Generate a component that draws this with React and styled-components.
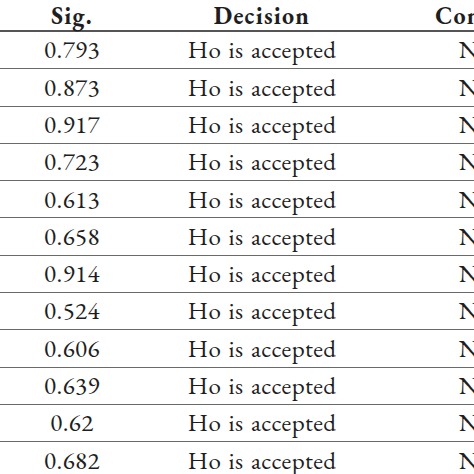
import React from 'react'
import styled, { createGlobalStyle } from 'styled-components'

const Global = createGlobalStyle`
  html, body {
    margin: 0;
    padding: 0;
    background: #ffffff;
    overflow: hidden;
  }
`

const Frame = styled.div`
  width: 474px;
  height: 474px;
  overflow: hidden;
  background: #ffffff;
  font-family: "EB Garamond", Garamond, "Liberation Serif", "DejaVu Serif", serif;
  color: #1e1e1e;
`

const Table = styled.div`
  display: grid;
  grid-template-columns: 144px 236px 236px;
  width: 616px;
`

const Row = styled.div`
  display: contents;
`

const Cell = styled.div`
  box-sizing: border-box;
  height: ${props => (props.head ? '32px' : '37.3px')};
  display: flex;
  align-items: center;
  justify-content: center;
  white-space: nowrap;
  line-height: 1.1;
  font-size: ${props => (props.head ? '24px' : '25px')};
  letter-spacing: ${props => (props.head ? '1.2px' : '0.4px')};
  word-spacing: 2px;
  font-weight: ${props => (props.head ? 700 : 400)};
  border-bottom: ${props => (props.head ? '2px solid #555555' : '1px solid #6a6a6a')};
  padding-top: ${props => (props.head ? '3px' : '0')};
`

const rows = [
  '0.793', '0.873', '0.917', '0.723', '0.613', '0.658',
  '0.914', '0.524', '0.606', '0.639', '0.62', '0.682',
]

export default function App() {
  return (
    <Frame>
      <Global />
      <Table>
        <Row>
          <Cell head>Sig.</Cell>
          <Cell head>Decision</Cell>
          <Cell head>Conclusion</Cell>
        </Row>
        {rows.map((sig, i) => (
          <Row key={i}>
            <Cell>{sig}</Cell>
            <Cell>Ho is accepted</Cell>
            <Cell>Normal</Cell>
          </Row>
        ))}
      </Table>
    </Frame>
  )
}
